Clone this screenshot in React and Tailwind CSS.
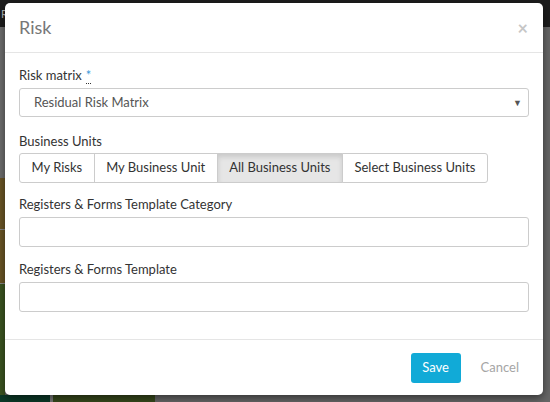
import React, { useState } from 'react';

const scopes = ['My Risks', 'My Business Unit', 'All Business Units', 'Select Business Units'];

const Label = ({ children, required }) => (
  <label className="block text-[13px] leading-[18px] text-[#333]">
    {children}
    {required && (
      <abbr title="required" className="ml-1 text-[#3a9ad9] no-underline border-b border-dotted border-[#333] cursor-help">
        *
      </abbr>
    )}
  </label>
);

const TextField = () => (
  <input
    type="text"
    className="mt-1 block w-full h-[30px] rounded-[3px] border border-[#ccc] bg-white px-3 text-[13px] text-[#555] outline-none"
  />
);

export default function App() {
  const [scope, setScope] = useState('All Business Units');

  return (
    <div className="relative w-[550px] h-[402px] overflow-hidden bg-[#666] font-['Lato',sans-serif]">
      {/* page behind the overlay */}
      <div className="h-[27px] bg-[#1d1d1d] text-[11px] leading-[27px] text-[#bbb] pl-px">R</div>
      <div className="flex flex-col w-[5px] h-[375px]">
        <div className="h-[151px] bg-[#6e6e6e]" />
        <div className="h-[52px] bg-[#6b5626] border-b border-[#888]" />
        <div className="h-[54px] bg-[#6b5626] border-b border-[#888]" />
        <div className="flex-1 bg-[#3c5521]" />
      </div>
      <div className="absolute left-0 bottom-0 flex h-[7px] w-[155px]">
        <div className="w-[50px] bg-[#0c3a28]" />
        <div className="w-[3px] bg-[#777]" />
        <div className="flex-1 bg-[#37491c]" />
      </div>

      {/* modal */}
      <div className="absolute left-[5px] top-[3px] w-[538px] h-[392px] rounded-[5px] bg-white shadow-[0_3px_9px_rgba(0,0,0,0.5)] flex flex-col">
        <div className="flex items-center justify-between h-[50px] px-[14px] border-b border-[#e5e5e5]">
          <h4 className="text-[18px] text-[#777]">Risk</h4>
          <button type="button" className="text-[18px] leading-none font-bold text-[#c6c6c6] pr-[1px]">×</button>
        </div>

        <div className="px-[14px] pt-[13px] pb-[27px] border-b border-[#e5e5e5]">
          <Label required>Risk matrix</Label>
          <div className="relative mt-1">
            <select className="block w-full h-[29px] appearance-none rounded-[3px] border border-[#ccc] bg-white pl-[14px] text-[13px] text-[#555] outline-none">
              <option>Residual Risk Matrix</option>
            </select>
            <span className="pointer-events-none absolute right-[7px] top-[8px] text-[9px] text-[#555]">▼</span>
          </div>

          <div className="mt-[15px]">
            <Label>Business Units</Label>
            <div className="mt-[3px] inline-flex">
              {scopes.map((item, i) => (
                <button
                  key={item}
                  type="button"
                  onClick={() => setScope(item)}
                  className={
                    'h-[30px] px-[11.5px] border border-[#ccc] text-[13px] text-[#333] ' +
                    (i > 0 ? '-ml-px ' : 'rounded-l-[3px] ') +
                    (i === scopes.length - 1 ? 'rounded-r-[3px] ' : '') +
                    (scope === item ? 'bg-[#e6e6e6] border-[#adadad] shadow-[inset_0_3px_5px_rgba(0,0,0,0.125)]' : 'bg-white')
                  }
                >
                  {item}
                </button>
              ))}
            </div>
          </div>

          <div className="mt-[12px]">
            <Label>Registers &amp; Forms Template Category</Label>
            <TextField />
          </div>

          <div className="mt-[13px]">
            <Label>Registers &amp; Forms Template</Label>
            <TextField />
          </div>
        </div>

        <div className="flex items-center justify-end gap-[8px] px-[12px] pt-[13px]">
          <button type="button" className="h-[30px] w-[50px] rounded-[3px] bg-[#11aad7] text-[13px] text-white">Save</button>
          <button type="button" className="h-[30px] px-[12px] text-[13px] text-[#a5a5a5]">Cancel</button>
        </div>
      </div>
    </div>
  );
}
